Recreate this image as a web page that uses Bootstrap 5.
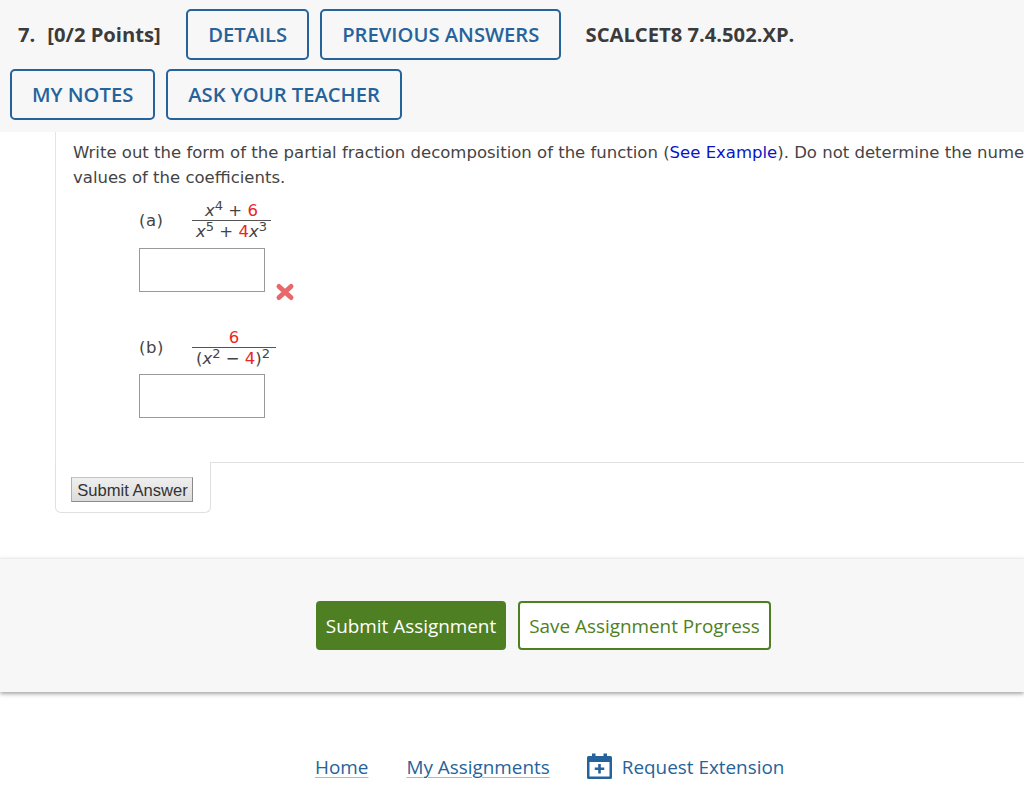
<!DOCTYPE html>
<html lang="en">
<head>
<meta charset="utf-8">
<title>Question 7</title>
<link rel="stylesheet" href="https://cdn.jsdelivr.net/npm/bootstrap@5.3.0/dist/css/bootstrap.min.css">
<style>
html, body { height: 800px; overflow: hidden; }
body { background: #fff; color: #3b3b3b; font-family: "Open Sans", sans-serif; }
.q-head { background: #f7f7f7; height: 132px; padding: 9px 10px 0; }
.q-head-row { height: 51px; margin-bottom: 9px; gap: 11px; }
.q-num { font-size: 20.2px; font-weight: 700; color: #3b3b3b; margin-left: 8px; margin-right: 14.4px; white-space: nowrap; }
.q-num-gap { margin-left: 12px; }
.q-code { font-size: 20.2px; font-weight: 700; margin-left: 13.2px; white-space: nowrap; }
.q-btn { font-size: 20.2px; font-weight: 600; color: #26639b; border: 2px solid #26639b; border-radius: 5px; background: transparent; height: 51px; padding: 0 20px; line-height: 47px; text-transform: uppercase; white-space: nowrap; }
.q-wrap { margin-left: 55px; height: 381px; display: flex; flex-direction: column; font-family: "DejaVu Sans", sans-serif; font-size: 16.5px; color: #444; }
.q-body { border-left: 1px solid #e4e4e4; height: 330px; padding: 8px 0 0 17px; }
.q-line { line-height: 25px; white-space: nowrap; }
.q-link { color: #0a14c8; text-decoration: none; }
.q-part { margin-left: 66px; }
.part-a { margin-top: 9px; height: 93px; }
.part-b { margin-top: 34px; }
.part-row { display: flex; height: 49px; }
.part-b .part-row { height: 48px; }
.part-label { width: 53px; line-height: 1; padding-top: 14px; letter-spacing: .5px; }
.frac { display: inline-flex; flex-direction: column; align-items: center; font-size: 16.5px; line-height: 1; }
.frac-top { border-bottom: 1px solid #555; height: 22px; width: 100%; text-align: center; padding-top: 4px; }
.frac-bot { padding: 3px 4px 0; white-space: nowrap; }
.part-b .frac-bot { padding-right: 6px; }
.frac sup { font-size: 13px; top: -.45em; line-height: 0; }
.num-red { color: #e8261f; }
.ans-row { display: flex; }
.ans-box { width: 126px; height: 44px; border: 1px solid #999; background: #fff; display: block; border-radius: 0; padding: 0; }
.ans-mark { width: 20px; height: 20px; margin: 34px 0 0 10px; }
.q-foot { display: flex; height: 51px; }
.q-submit-cell { width: 156px; border: 1px solid #e0e0e0; border-top: 0; border-bottom-left-radius: 6px; border-bottom-right-radius: 6px; padding-top: 15px; padding-left: 15px; }
.q-rest { flex: 1; border-top: 1px solid #e0e0e0; }
.q-submit { font-family: "Liberation Sans", sans-serif; font-size: 16.6px; color: #333; background: linear-gradient(#efefef, #dcdcdc); border: 1px solid #8a8a8a; border-top-color: #c4c4c4; border-left-color: #b0b0b0; height: 25px; width: 122px; padding: 3px 0 0 1px; line-height: 1; }
.bar { margin-top: 45px; background: #f7f7f7; height: 134px; border-top: 1px solid #eeeeee; box-shadow: 0 2px 4px rgba(0,0,0,.35); padding-top: 42px; padding-left: 316px; gap: 12px; }
.bar-btn { font-size: 18.9px; height: 49px; line-height: 45px; border-radius: 4px; border: 2px solid #4f7f23; padding: 1px 0 0; white-space: nowrap; }
.bar-fill { background: #4f7f23; color: #fff; width: 190px; }
.bar-line { background: #fff; color: #4f7f23; width: 253px; }
.foot-links { padding: 60px 0 0 315px; font-size: 18.9px; line-height: 30px; color: #26639b; }
.foot-links a { color: #26639b; text-decoration: underline; text-decoration-color: #9dbcd8; text-underline-offset: 3px; text-decoration-thickness: 1px; white-space: nowrap; }
.foot-links a.plain { text-decoration: none; }
.foot-a1 { margin-right: 38px; }
.foot-a2 { margin-right: 37px; }
.foot-icon { width: 26px; height: 26px; margin-right: 9px; margin-bottom: 2px; flex: none; }
</style>
</head>
<body>
<div class="q-head">
  <div class="q-head-row d-flex align-items-center">
    <span class="q-num">7.<span class="q-num-gap">[0/2 Points]</span></span>
    <button type="button" class="btn q-btn">Details</button>
    <button type="button" class="btn q-btn">Previous Answers</button>
    <span class="q-code">SCALCET8 7.4.502.XP.</span>
  </div>
  <div class="q-head-row d-flex align-items-center">
    <button type="button" class="btn q-btn">My Notes</button>
    <button type="button" class="btn q-btn">Ask Your Teacher</button>
  </div>
</div>

<div class="q-wrap">
  <div class="q-body">
    <div class="q-line">Write out the form of the partial fraction decomposition of the function (<a class="q-link" href="#">See Example</a>). Do not determine the numerical</div>
    <div class="q-line">values of the coefficients.</div>
    <div class="q-part part-a">
      <div class="part-row">
        <span class="part-label">(a)</span>
        <span class="frac">
          <span class="frac-top"><i>x</i><sup>4</sup> + <span class="num-red">6</span></span>
          <span class="frac-bot"><i>x</i><sup>5</sup> + <span class="num-red">4</span><i>x</i><sup>3</sup></span>
        </span>
      </div>
      <div class="ans-row">
        <input class="ans-box" type="text" aria-label="Answer a">
        <svg class="ans-mark" viewBox="0 0 20 20" aria-hidden="true"><path d="M4 4.500 L16 15.500 M16 4.500 L4 15.500" stroke="#e8696b" stroke-width="5" stroke-linecap="round" fill="none"/></svg>
      </div>
    </div>
    <div class="q-part part-b">
      <div class="part-row">
        <span class="part-label">(b)</span>
        <span class="frac">
          <span class="frac-top"><span class="num-red">6</span></span>
          <span class="frac-bot">(<i>x</i><sup>2</sup> &minus; <span class="num-red">4</span>)<sup>2</sup></span>
        </span>
      </div>
      <input class="ans-box" type="text" aria-label="Answer b">
    </div>
  </div>
  <div class="q-foot">
    <div class="q-submit-cell"><button type="button" class="q-submit">Submit Answer</button></div>
    <div class="q-rest"></div>
  </div>
</div>

<div class="bar d-flex align-items-start">
  <button type="button" class="btn bar-btn bar-fill">Submit Assignment</button>
  <button type="button" class="btn bar-btn bar-line">Save Assignment Progress</button>
</div>

<div class="foot-links d-flex align-items-center">
  <a class="foot-a1" href="#">Home</a>
  <a class="foot-a2" href="#">My Assignments</a>
  <svg class="foot-icon" viewBox="0 0 26 26" aria-hidden="true">
    <path d="M1.500 3H5V0.500h3.500V3h8V0.500H20V3h3.500A1.500 1.500 0 0 1 25 4.500V24.500A1.500 1.500 0 0 1 23.500 26H1.500A1.500 1.500 0 0 1 0 24.500V4.500A1.500 1.500 0 0 1 1.500 3z M2.500 9V23.500H22.500V9z" fill="#26639b" fill-rule="evenodd"/>
    <path d="M12.500 11v9.500M7.750 15.750h9.500" stroke="#26639b" stroke-width="2.600" fill="none"/>
  </svg>
  <a class="plain" href="#">Request Extension</a>
</div>
<script src="https://cdn.jsdelivr.net/npm/bootstrap@5.3.0/dist/js/bootstrap.bundle.min.js"></script>
</body>
</html>
